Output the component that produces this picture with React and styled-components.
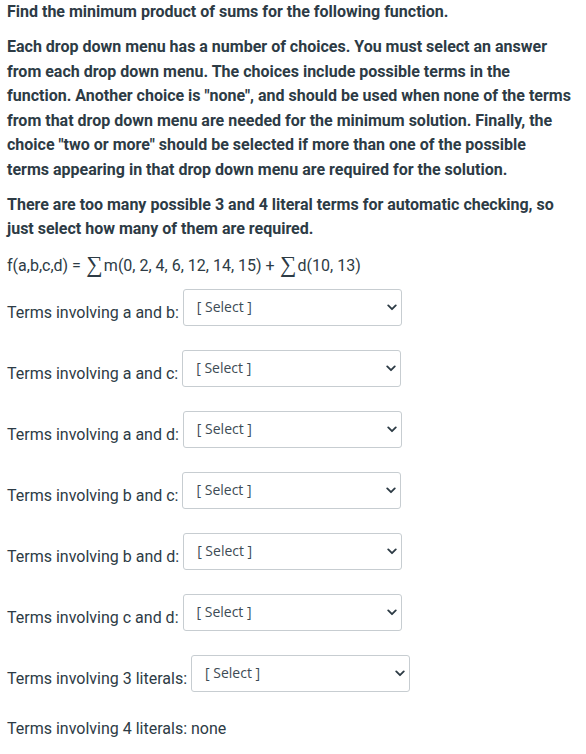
import React from "react"
import styled, { createGlobalStyle } from "styled-components"

const GlobalStyle = createGlobalStyle`
  body {
    margin: 0;
    background: #fff;
    font-family: Roboto, "Liberation Sans", sans-serif;
    color: #2d3b45;
  }
`

const labels = [
  "Terms involving a and b:",
  "Terms involving a and c:",
  "Terms involving a and d:",
  "Terms involving b and c:",
  "Terms involving b and d:",
  "Terms involving c and d:",
  "Terms involving 3 literals:",
]

const Chevron = () => (
  <ChevronIcon viewBox="0 0 12 8" aria-hidden="true">
    <path d="M1.5 1.5 L6 6 L10.5 1.5" fill="none" stroke="#2d3b45" strokeWidth="2.2" strokeLinecap="round" strokeLinejoin="round" />
  </ChevronIcon>
)

const Question = () => {
  return (
    <Wrap>
      <GlobalStyle />
      <Para>
        <b>Find the minimum product of sums for the following function.</b>
      </Para>
      <Para>
        <b>
          Each drop down menu has a number of choices. You must select an
          answer from each drop down menu. The choices include possible terms
          in the function. Another choice is "none", and should be used when
          none of the terms from that drop down menu are needed for the minimum
          solution. Finally, the choice "two or more" should be selected if
          more than one of the possible terms appearing in that drop down menu
          are required for the solution.
        </b>
      </Para>
      <Para>
        <b>
          There are too many possible 3 and 4 literal terms for automatic
          checking, so just select how many of them are required.
        </b>
      </Para>
      <Formula>
        f(a,b,c,d) = <Sigma>∑</Sigma>m(0, 2, 4, 6, 12, 14, 15) +{" "}
        <Sigma>∑</Sigma>d(10, 13)
      </Formula>
      <Rows>
        {labels.map((label) => (
          <Row key={label}>
            <Label>{label}</Label>
            <SelectBox>
              <Select defaultValue="">
                <option value="">[ Select ]</option>
                <option>none</option>
                <option>two or more</option>
              </Select>
              <Chevron />
            </SelectBox>
          </Row>
        ))}
        <Plain>Terms involving 4 literals: none</Plain>
      </Rows>
    </Wrap>
  )
}

export default function App() {
  return <Question />
}

const Wrap = styled.div`
  padding: 0 7px 12px 7px;
  width: 564px;
  font-size: 16px;
  line-height: 24.5px;
`

const Para = styled.p`
  margin: 0 0 10.5px 0;

  b {
    font-weight: 700;
  }
`

const Formula = styled.div`
  margin-top: 12px;
  line-height: 24px;
  white-space: nowrap;
`

const Sigma = styled.span`
  display: inline-block;
  width: 19px;
  text-align: center;
  font-family: "Liberation Serif", serif;
  font-size: 23px;
  line-height: 16px;
  position: relative;
  top: 1px;
`

const Rows = styled.div`
  display: flex;
  flex-direction: column;
  gap: 24px;
  margin-top: 11px;
`

const Row = styled.div`
  display: flex;
  align-items: flex-end;
  gap: 4px;
`

const Label = styled.span`
  line-height: 24px;
  margin-bottom: 1px;
`

const SelectBox = styled.div`
  position: relative;
  width: 219px;
  height: 37px;
`

const Select = styled.select`
  appearance: none;
  width: 100%;
  height: 100%;
  box-sizing: border-box;
  border: 1px solid #c7cdd1;
  border-radius: 3px;
  background: #fff;
  padding: 0 30px 1px 13px;
  font-family: "Open Sans", "Liberation Sans", sans-serif;
  font-size: 14px;
  font-weight: 400;
  color: #3d4b55;
  outline: none;
`

const ChevronIcon = styled.svg`
  position: absolute;
  right: 5px;
  top: 15px;
  width: 10px;
  height: 7px;
  pointer-events: none;
`

const Plain = styled.div`
  line-height: 24px;
  margin-top: 1px;
`
